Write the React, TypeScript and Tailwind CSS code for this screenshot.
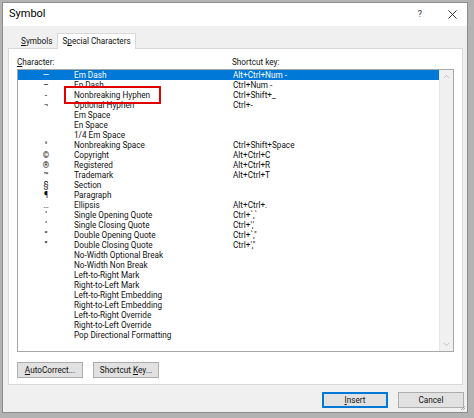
import { ChevronUp, ChevronDown } from 'lucide-react'

type Row = { ch: string; name: string; key: string }

const ROWS: Row[] = [
  { ch: '—', name: 'Em Dash', key: 'Alt+Ctrl+Num -' },
  { ch: '–', name: 'En Dash', key: 'Ctrl+Num -' },
  { ch: '-', name: 'Nonbreaking Hyphen', key: 'Ctrl+Shift+_' },
  { ch: '¬', name: 'Optional Hyphen', key: 'Ctrl+-' },
  { ch: '', name: 'Em Space', key: '' },
  { ch: '', name: 'En Space', key: '' },
  { ch: '', name: '1/4 Em Space', key: '' },
  { ch: '°', name: 'Nonbreaking Space', key: 'Ctrl+Shift+Space' },
  { ch: '©', name: 'Copyright', key: 'Alt+Ctrl+C' },
  { ch: '®', name: 'Registered', key: 'Alt+Ctrl+R' },
  { ch: '™', name: 'Trademark', key: 'Alt+Ctrl+T' },
  { ch: '§', name: 'Section', key: '' },
  { ch: '¶', name: 'Paragraph', key: '' },
  { ch: '…', name: 'Ellipsis', key: 'Alt+Ctrl+.' },
  { ch: '‘', name: 'Single Opening Quote', key: 'Ctrl+`,`' },
  { ch: '’', name: 'Single Closing Quote', key: "Ctrl+','" },
  { ch: '“', name: 'Double Opening Quote', key: 'Ctrl+`,"' },
  { ch: '”', name: 'Double Closing Quote', key: 'Ctrl+\',"' },
  { ch: '', name: 'No-Width Optional Break', key: '' },
  { ch: '', name: 'No-Width Non Break', key: '' },
  { ch: '', name: 'Left-to-Right Mark', key: '' },
  { ch: '', name: 'Right-to-Left Mark', key: '' },
  { ch: '', name: 'Left-to-Right Embedding', key: '' },
  { ch: '', name: 'Right-to-Left Embedding', key: '' },
  { ch: '', name: 'Left-to-Right Override', key: '' },
  { ch: '', name: 'Right-to-Left Override', key: '' },
  { ch: '', name: 'Pop Directional Formatting', key: '' },
]

function Btn({ children, primary }: { children: React.ReactNode; primary?: boolean }) {
  return (
    <button
      className={
        'flex h-[16px] w-[66px] items-center justify-center bg-[#e1e1e1] text-[8.2px] text-[#111] ' +
        (primary ? 'border-2 border-[#0078d7]' : 'border border-[#adadad]')
      }
    >
      {children}
    </button>
  )
}

export default function App() {
  return (
    <div
      className="h-[418px] w-[474px] bg-[#b3b3b3] pb-[5px] pl-[2px] pr-[6px] pt-[2px]"
      style={{ fontFamily: 'Roboto, "Noto Sans", sans-serif' }}
    >
      <div className="relative flex h-full flex-col border border-[#8c8c8c] bg-[#f0f0f0]">
        {/* Title bar */}
        <div className="flex h-[23px] shrink-0 items-center bg-white pl-[6px] pr-[10px]">
          <span className="text-[11px] text-black">Symbol</span>
          <span className="ml-auto mr-[26px] text-[9px] text-[#333]">?</span>
          <svg width="9" height="9" viewBox="0 0 9 9">
            <path d="M0.5 0.5 L8.5 8.5 M8.5 0.5 L0.5 8.5" stroke="#222" strokeWidth="0.9" />
          </svg>
        </div>

        {/* Tabs */}
        <div className="flex h-[22px] shrink-0 items-end pl-[13px]">
          <div className="flex h-[13px] items-center px-[5px] text-[8.2px] text-[#111]">
            <span>
              <span className="underline">S</span>ymbols
            </span>
          </div>
          <div className="-mb-px z-10 flex h-[16px] items-center border border-b-0 border-[#d9d9d9] bg-white px-[4px] text-[8.2px] text-[#111]">
            <span>
              S<span className="underline">p</span>ecial Characters
            </span>
          </div>
        </div>

        {/* Tab page */}
        <div className="ml-[5px] mr-[4px] flex h-[337px] shrink-0 flex-col border border-[#d9d9d9] bg-white px-[8px] pt-[7px]">
          <div className="flex h-[13px] items-center text-[8.2px] text-[#111]">
            <span className="w-[215px]">
              <span className="underline">C</span>haracter:
            </span>
            <span>Shortcut key:</span>
          </div>

          <div className="relative flex h-[283px] border border-[#a8a8a8] bg-white">
            <div className="flex-1">
              {ROWS.map((r, i) => (
                <div
                  key={r.name}
                  className={
                    'flex h-[10px] items-center text-[8.2px] leading-none ' +
                    (i === 0 ? 'bg-[#0078d7] text-white' : 'text-[#111]')
                  }
                >
                  <span className="w-[56px] text-center">{r.ch}</span>
                  <span className="w-[159px] whitespace-nowrap">{r.name}</span>
                  <span className="whitespace-nowrap">{r.key}</span>
                </div>
              ))}
            </div>
            <div className="flex w-[14px] flex-col items-center justify-between border-l border-[#e6e6e6] bg-[#f0f0f0] py-[2px]">
              <ChevronUp size={9} color="#b0b0b0" strokeWidth={2} />
              <ChevronDown size={9} color="#b0b0b0" strokeWidth={2} />
            </div>

            {/* highlight box */}
            <div className="absolute left-[46px] top-[16px] h-[18px] w-[97px] border-[2.5px] border-[#e00000]" />
          </div>

          <div className="mt-[10px] flex gap-[10px]">
            <Btn>
              <span>
                <span className="underline">A</span>utoCorrect...
              </span>
            </Btn>
            <Btn>
              <span>
                Shortcut <span className="underline">K</span>ey...
              </span>
            </Btn>
          </div>
        </div>

        {/* Footer */}
        <div className="flex flex-1 items-start justify-end gap-[10px] pr-[3px] pt-[7px]">
          <Btn primary>
            <span>
              <span className="underline">I</span>nsert
            </span>
          </Btn>
          <Btn>Cancel</Btn>
        </div>

        <svg width="6" height="6" viewBox="0 0 6 6" className="absolute bottom-[1px] right-[1px]">
          <path d="M5 1 L1 5 M5 3 L3 5" stroke="#9a9a9a" strokeWidth="0.8" />
        </svg>
      </div>
    </div>
  )
}
